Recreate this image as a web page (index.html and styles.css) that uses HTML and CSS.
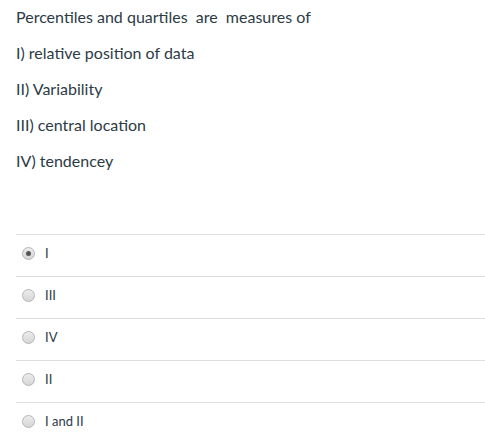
FILE: index.html
```html
<!DOCTYPE html>
<html>
<head>
<meta charset="utf-8">
<link rel="stylesheet" href="styles.css">
</head>
<body>
<div class="question">
  <p>Percentiles and quartiles&nbsp; are&nbsp; measures of</p>
  <p>I) relative position of data</p>
  <p>II) Variability</p>
  <p>III) central location</p>
  <p>IV) tendencey</p>
</div>
<div class="answers">
  <div class="answer"><span class="radio checked"></span><span class="label">I</span></div>
  <div class="answer"><span class="radio"></span><span class="label">III</span></div>
  <div class="answer"><span class="radio"></span><span class="label">IV</span></div>
  <div class="answer"><span class="radio"></span><span class="label">II</span></div>
  <div class="answer"><span class="radio"></span><span class="label">I and II</span></div>
</div>
</body>
</html>
```
FILE: styles.css
```css
html, body {
  margin: 0;
  padding: 0;
  background: #fff;
}
body {
  font-family: Lato, "Liberation Sans", sans-serif;
  color: #2d3b45;
}
.question {
  padding: 7px 16px 0;
  font-size: 16px;
}
.question p {
  margin: 0 0 16px;
  line-height: 20px;
}
.answers {
  margin: 63px 0 0 16px;
}
.answer {
  box-sizing: border-box;
  height: 42px;
  border-top: 1px solid #dddddd;
  display: flex;
  align-items: flex-start;
  padding: 12px 0 0 6px;
  font-size: 13px;
}
.radio {
  box-sizing: border-box;
  width: 13px;
  height: 13px;
  border-radius: 50%;
  border: 1px solid #b5b5b5;
  background: linear-gradient(#ececec, #d6d6d6);
  position: relative;
  flex: none;
}
.radio.checked::after {
  content: "";
  position: absolute;
  left: 3px;
  top: 3px;
  width: 5px;
  height: 5px;
  border-radius: 50%;
  background: #555;
}
.label {
  margin-left: 10px;
  line-height: 13px;
}
```
